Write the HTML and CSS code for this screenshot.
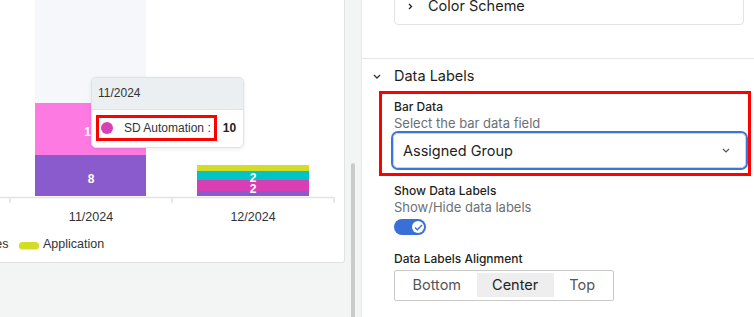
FILE: index.html
```html
<!DOCTYPE html>
<html>

<head>
  <meta charset="UTF-8">
  <title>Chart settings</title>
  <link rel="stylesheet" href="styles.css">
</head>

<body>
  <div class="page">
    <div class="canvas-col">
      <div class="chart-card">
        <svg class="chart" width="344" height="262" viewBox="0 0 344 262">
          <!-- hover band -->
          <rect x="35" y="0" width="111" height="196" fill="#f5f7fa" />
          <!-- 11/2024 -->
          <rect x="35" y="103" width="111" height="52" fill="#fd7ae2" />
          <rect x="35" y="155" width="111" height="41" fill="#8a5bcd" />
          <!-- 12/2024 -->
          <rect x="197" y="165" width="112" height="6" fill="#d5dc26" />
          <rect x="197" y="171" width="112" height="9" fill="#00c4c6" />
          <rect x="197" y="180" width="112" height="11" fill="#d83fb5" />
          <rect x="197" y="191" width="112" height="5" fill="#8a5bcd" />
          <!-- data labels -->
          <text class="bar-label" x="91" y="136">10</text>
          <text class="bar-label" x="91" y="183">8</text>
          <text class="bar-label" x="253" y="182">2</text>
          <text class="bar-label" x="253" y="193">2</text>
          <!-- axis -->
          <line x1="0" y1="197.5" x2="334" y2="197.5" stroke="#e3e3e3" stroke-width="1.5" />
          <line x1="10" y1="197" x2="10" y2="203" stroke="#e3e3e3" stroke-width="1.5" />
          <line x1="172" y1="197" x2="172" y2="203" stroke="#e3e3e3" stroke-width="1.5" />
          <line x1="334" y1="197" x2="334" y2="203" stroke="#e3e3e3" stroke-width="1.5" />
          <text class="axis-label" x="91" y="221">11/2024</text>
          <text class="axis-label" x="253" y="221">12/2024</text>
          <!-- legend -->
          <text class="legend-label" x="8.5" y="248" text-anchor="end">Services</text>
          <rect x="19" y="242" width="20" height="7.5" rx="3.5" fill="#d5dc26" />
          <text class="legend-label" x="43" y="248">Application</text>
        </svg>
        <div class="tooltip">
          <div class="tooltip-head">11/2024</div>
          <div class="tooltip-body">
            <div class="tooltip-series">
              <span class="tooltip-dot"></span>
              <span>SD Automation :</span>
            </div>
            <b class="tooltip-value">10</b>
          </div>
        </div>
      </div>
    </div>
    <div class="scroll-track">
      <div class="scroll-thumb"></div>
    </div>
    <aside class="panel">
      <div class="section-top">
        <div class="collapsed">
          <svg class="caret" width="5" height="7" viewBox="0 0 5 7">
            <path d="M1 1l2.5 2.5L1 6" fill="none" stroke="#222" stroke-width="1.3" />
          </svg>
          <span>Color Scheme</span>
        </div>
      </div>
      <div class="section">
        <div class="section-head">
          <svg class="chevron" width="8" height="5" viewBox="0 0 8 5">
            <path d="M1 1l3 3 3-3" fill="none" stroke="#333" stroke-width="1.3" />
          </svg>
          <span>Data Labels</span>
        </div>
        <div class="highlight">
          <div class="field-label">Bar Data</div>
          <div class="field-hint">Select the bar data field</div>
          <div class="select">
            <span>Assigned Group</span>
            <svg width="8" height="5" viewBox="0 0 8 5">
              <path d="M1 1l3 3 3-3" fill="none" stroke="#555" stroke-width="1.2" />
            </svg>
          </div>
        </div>
        <div class="field">
          <div class="field-label">Show Data Labels</div>
          <div class="field-hint">Show/Hide data labels</div>
          <div class="toggle">
            <span class="toggle-knob">
              <svg width="9" height="7" viewBox="0 0 9 7">
                <path d="M1 3.5l2.3 2.3L8 1" fill="none" stroke="#3a6fd8" stroke-width="1.4" />
              </svg>
            </span>
          </div>
        </div>
        <div class="field field-gap">
          <div class="field-label">Data Labels Alignment</div>
          <div class="segmented">
            <span class="segment">Bottom</span>
            <span class="segment segment-active">Center</span>
            <span class="segment">Top</span>
          </div>
        </div>
      </div>
    </aside>
  </div>
</body>

</html>
```

FILE: styles.css
```css
html,
body {
  height: 100%;
  margin: 0;
  overflow: hidden;
}

body {
  font-family: Inter, "Noto Sans", sans-serif;
  color: #1d1f22;
  background-color: #f3f4f4;
}

.page {
  display: flex;
  height: 100%;
}

.canvas-col {
  width: 345px;
  flex-shrink: 0;
}

.chart-card {
  position: relative;
  width: 344px;
  height: 262px;
  background-color: #fff;
  border-right: 1px solid #e2e2e2;
  border-bottom: 1px solid #e2e2e2;
  border-bottom-right-radius: 3px;
}

.chart {
  display: block;
  font-family: "Liberation Sans", Arial, sans-serif;
}

.bar-label {
  font-size: 12px;
  font-weight: bold;
  fill: #fff;
  text-anchor: middle;
}

.axis-label {
  font-size: 12.5px;
  fill: #333;
  text-anchor: middle;
}

.legend-label {
  font-size: 12.5px;
  fill: #333;
}

.tooltip {
  position: absolute;
  left: 91px;
  top: 77px;
  width: 153px;
  box-sizing: border-box;
  border: 1px solid #dfe2e5;
  border-radius: 5px;
  background-color: #fff;
  box-shadow: 0 1px 4px rgba(0, 0, 0, 0.08);
  font-family: "Liberation Sans", Arial, sans-serif;
  font-size: 12px;
  color: #333;
  overflow: hidden;
}

.tooltip-head {
  height: 31px;
  line-height: 31px;
  padding-left: 6px;
  background-color: #eceff1;
  border-bottom: 1px solid #e0e3e6;
}

.tooltip-body {
  display: flex;
  align-items: center;
  padding: 5px 0 6px 4px;
}

.tooltip-series {
  display: flex;
  align-items: center;
  gap: 11px;
  height: 20px;
  padding: 0 3px 0 2px;
  border: 3px solid #f00;
}

.tooltip-dot {
  width: 12px;
  height: 12px;
  border-radius: 50%;
  background-color: #d83fb5;
}

.tooltip-value {
  margin-left: 6px;
  color: #222;
}

.scroll-track {
  width: 16px;
  flex-shrink: 0;
}

.scroll-thumb {
  width: 4px;
  height: 200px;
  margin: 163px 0 0 6px;
  border-radius: 2px;
  background-color: #cbcbcb;
}

.panel {
  flex: 1;
  background-color: #fff;
  border-left: 1px solid #e6e6e6;
}

.section-top {
  padding: 0 11px 33px 32px;
  border-bottom: 1px solid #e6e6e6;
}

.collapsed {
  display: flex;
  align-items: center;
  width: 350px;
  box-sizing: border-box;
  margin-top: -14px;
  padding: 9px 16px 8px 13px;
  border: 1px solid #e3e3e3;
  border-radius: 4px;
  font-size: 14.5px;
  line-height: 20px;
}

.caret {
  margin-right: 15px;
}

.section-head {
  display: flex;
  align-items: center;
  padding: 7px 0 0 11px;
  font-size: 14.5px;
  line-height: 20px;
}

.chevron {
  margin-right: 13px;
}

.highlight {
  width: 372px;
  box-sizing: border-box;
  margin: 5px 0 0 17px;
  padding: 5px 2px 5px 12px;
  border: 3px solid #f00;
}

.field-label {
  font-size: 12px;
  font-weight: 500;
  line-height: 16px;
}

.field-hint {
  font-size: 13px;
  line-height: 17px;
  color: #6b7075;
}

.select {
  display: flex;
  align-items: center;
  justify-content: space-between;
  width: 353px;
  height: 35px;
  box-sizing: border-box;
  margin: 1px 0 0 -1px;
  padding: 0 15px 0 9px;
  border: 1px solid #d3d3d3;
  border-radius: 5px;
  box-shadow: 0 0 0 2px #3d74d9;
  font-size: 14.5px;
}

.field {
  margin: 7px 0 0 32px;
}

.field-gap {
  margin-top: 16px;
}

.toggle {
  display: flex;
  align-items: center;
  justify-content: flex-end;
  width: 32px;
  height: 16px;
  margin-top: 3px;
  padding: 0 2px;
  box-sizing: border-box;
  border-radius: 8px;
  background-color: #3a6fd8;
}

.toggle-knob {
  display: flex;
  align-items: center;
  justify-content: center;
  width: 12px;
  height: 12px;
  border-radius: 50%;
  background-color: #fff;
}

.segmented {
  display: inline-flex;
  margin-top: 3px;
  padding: 2px 2px 3px;
  border: 1px solid #c9c9c9;
  border-radius: 2px;
  font-size: 14.5px;
}

.segment {
  height: 24px;
  line-height: 24px;
  padding: 0 15.5px;
  color: #555;
}

.segment-active {
  color: #222;
  background-color: #eeeeee;
}
```
